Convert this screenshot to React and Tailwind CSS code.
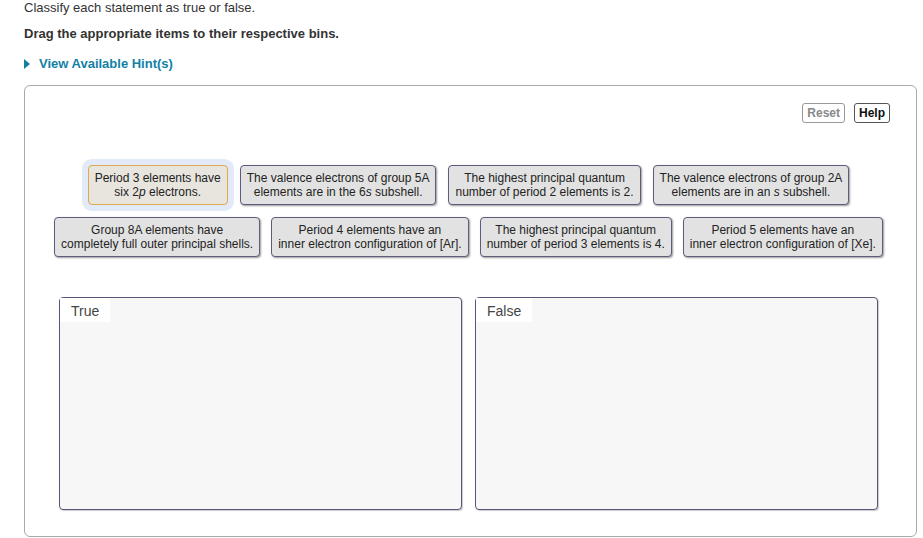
import React from "react";

const rowOne = [
  { id: 1, lines: ["Period 3 elements have", <>six 2<i>p</i> electrons.</>], active: true },
  { id: 2, lines: ["The valence electrons of group 5A", <>elements are in the 6<i>s</i> subshell.</>] },
  { id: 3, lines: ["The highest principal quantum", "number of period 2 elements is 2."] },
  { id: 4, lines: ["The valence electrons of group 2A", <>elements are in an <i>s</i> subshell.</>] },
];

const rowTwo = [
  { id: 5, lines: ["Group 8A elements have", "completely full outer principal shells."] },
  { id: 6, lines: ["Period 4 elements have an", "inner electron configuration of [Ar]."] },
  { id: 7, lines: ["The highest principal quantum", "number of period 3 elements is 4."] },
  { id: 8, lines: ["Period 5 elements have an", "inner electron configuration of [Xe]."] },
];

function Card({ item }) {
  const base =
    "rounded-[4px] border px-[6px] pt-[5px] pb-[5px] text-center text-[12px] leading-[14px] text-[#222] shadow-[1px_1px_2px_rgba(0,0,0,0.4)]";
  const look = item.active
    ? "border-[#e0a850] bg-[#e8e5df] ring-[6px] ring-[#e2e9f7]"
    : "border-[#5c5c7c] bg-[#e2e2e2]";
  return (
    <div className={`${base} ${look}`}>
      <div>{item.lines[0]}</div>
      <div>{item.lines[1]}</div>
    </div>
  );
}

function Bin({ label }) {
  return (
    <div className="h-[213px] w-[403px] rounded-[4px] border border-[#55557a] bg-[#f7f7f7] shadow-[1px_1px_1px_rgba(0,0,0,0.2)]">
      <div className="inline-block bg-white px-[11px] pt-[5px] pb-[3px] text-[14px] leading-[16px] text-[#444]">
        {label}
      </div>
    </div>
  );
}

export default function App() {
  return (
    <div className="min-h-[538px] bg-white font-['Liberation_Sans',Arial,sans-serif] text-[#333]">
      {/* question text */}
      <div className="pl-[24px]">
        <p className="text-[13px] leading-[15px]">Classify each statement as true or false.</p>
        <p className="mt-[11px] text-[13px] font-bold leading-[15px]">Drag the appropriate items to their respective bins.</p>
        <div className="mt-[15px] flex items-center gap-[9px] text-[13px] font-bold leading-[15px] text-[#127fa6]">
          <svg width="6" height="10" viewBox="0 0 6 10">
            <path d="M0 0L6 5L0 10Z" fill="#127fa6" />
          </svg>
          <span>View Available Hint(s)</span>
        </div>
      </div>

      {/* activity panel */}
      <div className="ml-[24px] mt-[14px] h-[452px] w-[893px] rounded-[6px] border border-[#aaaaaa]">
        <div className="flex justify-end gap-[9px] pr-[26px] pt-[17px]">
          <button className="rounded-[3px] border border-[#999] px-[4px] text-[12px] font-bold leading-[18px] text-[#888]">
            Reset
          </button>
          <button className="rounded-[3px] border border-[#555] px-[4px] text-[12px] font-bold leading-[18px] text-[#111]">
            Help
          </button>
        </div>

        <div className="mt-[42px] flex flex-col items-center gap-[12px] pr-[4px]">
          <div className="flex gap-[12px]">
            {rowOne.map((c) => (
              <Card key={c.id} item={c} />
            ))}
          </div>
          <div className="flex gap-[11px]">
            {rowTwo.map((c) => (
              <Card key={c.id} item={c} />
            ))}
          </div>
        </div>

        <div className="mt-[40px] flex justify-center gap-[13px] pr-[4px]">
          <Bin label="True" />
          <Bin label="False" />
        </div>
      </div>
    </div>
  );
}
